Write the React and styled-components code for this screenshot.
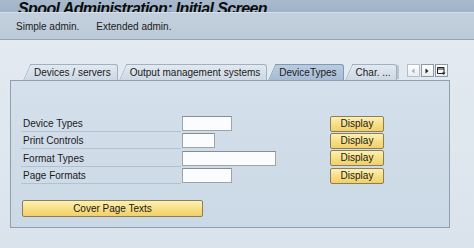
import React from 'react';
import styled, { createGlobalStyle } from 'styled-components';

const GlobalStyle = createGlobalStyle`
  html, body {
    margin: 0;
    padding: 0;
  }
  body {
    width: 474px;
    height: 248px;
    overflow: hidden;
    font-family: Tahoma, "Liberation Sans", Arial, sans-serif;
    background: #dfe7ef;
  }
`;

const rows = [
  { label: 'Device Types', width: 48 },
  { label: 'Print Controls', width: 31 },
  { label: 'Format Types', width: 92 },
  { label: 'Page Formats', width: 48 },
];

const tabs = [
  { label: 'Devices / servers' },
  { label: 'Output management systems' },
  { label: 'DeviceTypes', active: true },
  { label: 'Char. ...', last: true },
];

const App = () => (
  <Screen>
    <GlobalStyle />
    <TitleBar>
      <Title>Spool Administration: Initial Screen</Title>
    </TitleBar>
    <Toolbar>
      <ToolItem>Simple admin.</ToolItem>
      <ToolItem>Extended admin.</ToolItem>
    </Toolbar>
    <Body>
      <TabStrip>
        <Tabs>
          {tabs.map((t) => (
            <Tab key={t.label} $active={t.active} $last={t.last}>
              {t.label}
            </Tab>
          ))}
        </Tabs>
        <Scrollers>
          <ScrollBtn $disabled>
            <svg width="8" height="8" viewBox="0 0 8 8">
              <path d="M5.5 1.5 L2.5 4 L5.5 6.5 Z" fill="#b0b0b0" />
            </svg>
          </ScrollBtn>
          <ScrollBtn>
            <svg width="8" height="8" viewBox="0 0 8 8">
              <path d="M2.5 1.5 L5.5 4 L2.5 6.5 Z" fill="#202020" />
            </svg>
          </ScrollBtn>
          <ScrollBtn>
            <svg width="10" height="10" viewBox="0 0 10 10">
              <path d="M1.5 1.5 H8 V7.5 H1.5 Z" fill="#f4f6f8" stroke="#202020" strokeWidth="1" />
              <path d="M1.5 3 H8" stroke="#202020" strokeWidth="1" />
              <path d="M6 6.5 L9.5 6.5 L7.75 9 Z" fill="#202020" />
            </svg>
          </ScrollBtn>
        </Scrollers>
      </TabStrip>
      <Panel>
        <FormGrid>
          {rows.map((r) => (
            <React.Fragment key={r.label}>
              <Label>{r.label}</Label>
              <InputCell>
                <Field style={{ width: r.width }} />
              </InputCell>
              <DisplayButton>Display</DisplayButton>
            </React.Fragment>
          ))}
        </FormGrid>
        <WideButton>Cover Page Texts</WideButton>
      </Panel>
    </Body>
  </Screen>
);

const Screen = styled.div`
  width: 474px;
  height: 248px;
  display: flex;
  flex-direction: column;
`;

const TitleBar = styled.div`
  height: 12px;
  overflow: hidden;
  display: flex;
  align-items: flex-end;
  padding-left: 18px;
  background: linear-gradient(#a9bacd, #9fb2c8);
`;

const Title = styled.div`
  font-size: 16px;
  font-weight: bold;
  font-style: italic;
  letter-spacing: -0.6px;
  line-height: 16px;
  margin-bottom: -5px;
  color: #0c0c0c;
  white-space: nowrap;
`;

const Toolbar = styled.div`
  height: 26px;
  display: flex;
  align-items: center;
  gap: 17px;
  padding-left: 16px;
  background: linear-gradient(#c3d0dd, #bccad8);
  border-top: 1px solid #d5dfe9;
  border-bottom: 1px solid #95a6b8;
`;

const ToolItem = styled.span`
  font-size: 10px;
  color: #1b1b1b;
`;

const Body = styled.div`
  flex: 1;
  background: linear-gradient(#e3eaf1, #dae3ec);
  padding: 24px 24px 0 10px;
`;

const TabStrip = styled.div`
  display: flex;
  align-items: flex-end;
  padding-left: 12px;
  height: 16px;
`;

const Tabs = styled.div`
  display: flex;
  align-items: flex-end;
`;

const tabBorder = (p) => (p.$active ? '#8399b2' : '#a2b1c1');

const Tab = styled.div`
  position: relative;
  height: 15px;
  line-height: 15px;
  font-size: 10px;
  color: #1a1a1a;
  white-space: nowrap;
  padding: 0 ${(p) => (p.$last ? '5px' : '6px')} 0 4px;
  margin-left: 8px;
  background: ${(p) =>
    p.$active
      ? 'linear-gradient(#b9cbe0, #a7bcd4)'
      : 'linear-gradient(#e2e9f0, #cdd8e4)'};
  border-top: 1px solid ${tabBorder};
  border-right: 1px solid ${tabBorder};
  border-top-right-radius: 3px;
  z-index: ${(p) => (p.$active ? 3 : 1)};
  box-shadow: ${(p) => (p.$last ? '3px 0 0 -1px #b8c4d0' : 'none')};

  &::before {
    content: '';
    position: absolute;
    top: -1px;
    bottom: 0;
    left: -7px;
    width: 12px;
    background: inherit;
    border-top: 1px solid ${tabBorder};
    border-left: 1px solid ${tabBorder};
    border-top-left-radius: 2px;
    transform: skewX(-24deg);
    transform-origin: bottom left;
    z-index: -1;
  }
`;

const Scrollers = styled.div`
  display: flex;
  gap: 1px;
  margin-left: 10px;
  margin-bottom: 3px;
`;

const ScrollBtn = styled.div`
  width: 11px;
  height: 11px;
  display: flex;
  align-items: center;
  justify-content: center;
  border: 1px solid ${(p) => (p.$disabled ? '#b4bec9' : '#8d99a6')};
  background: linear-gradient(#ffffff, #e8edf2);
`;

const Panel = styled.div`
  position: relative;
  z-index: 2;
  height: 148px;
  box-sizing: border-box;
  border: 1px solid #8f9fb2;
  background: linear-gradient(#d4e0eb, #cbd9e6);
  padding: 34px 0 0 10px;
`;

const FormGrid = styled.div`
  display: grid;
  grid-template-columns: 160px 149px 54px;
  grid-auto-rows: 17.3px;
  align-items: center;
`;

const Label = styled.div`
  font-size: 10px;
  color: #1a1a1a;
  padding-left: 2px;
  height: 16px;
  line-height: 17px;
  border-bottom: 1px solid #b2c0cf;
`;

const InputCell = styled.div`
  display: flex;
  padding-left: 1px;
`;

const Field = styled.div`
  height: 13px;
  box-sizing: content-box;
  border: 1px solid #9ea4ab;
  border-top-color: #878d94;
  background: #fbfcfd;
`;

const buttonStyle = `
  box-sizing: border-box;
  font-family: Tahoma, "Liberation Sans", Arial, sans-serif;
  font-size: 10px;
  color: #1a1a1a;
  border: 1px solid #8b7f57;
  border-radius: 2px;
  background: linear-gradient(#fdf0b3, #f6dc7f 60%, #f1d06a);
  padding: 0;
`;

const DisplayButton = styled.button`
  ${buttonStyle}
  width: 54px;
  height: 16px;
  line-height: 14px;
`;

const WideButton = styled.button`
  ${buttonStyle}
  display: block;
  margin-top: 16px;
  margin-left: 1px;
  width: 181px;
  height: 17px;
  line-height: 15px;
`;

export default App;
